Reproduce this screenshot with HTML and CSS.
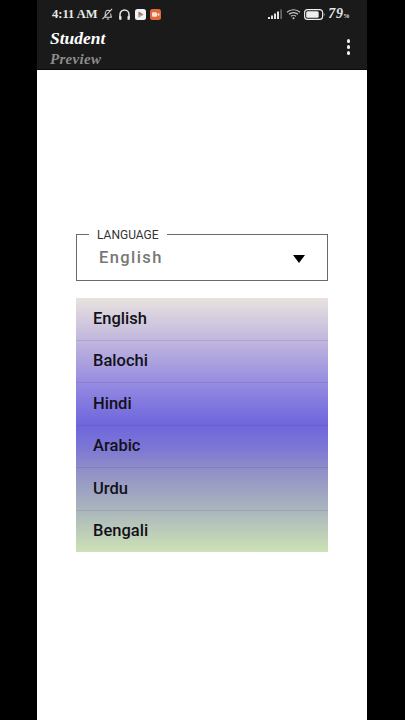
FILE: index.html
```html
<!DOCTYPE html>
<html lang="en">
<head>
<meta charset="utf-8">
<title>Student Preview</title>
<link rel="stylesheet" href="styles.css">
</head>
<body>
<div class="phone">
  <header class="appbar">
    <div class="status">
      <div class="status-left">
        <span class="time">4:11 AM</span>
        <svg class="ic" width="13" height="14" viewBox="0 0 14 14" fill="none" stroke="#d8d8d8" stroke-width="1.1"><path d="M3 10.5h8.5M3.6 10.5c1-1.2 1-2.4 1-4 0-2 1.2-3.5 3-3.5 1 0 1.8.4 2.3 1.2M10.4 6.500c0 1.500.2 2.800 1.100 4M6.300 12.300h2.400M1.500 12.500 12 1.500"/></svg>
        <svg class="ic" width="13" height="13" viewBox="0 0 13 13" fill="none" stroke="#e6e6e6" stroke-width="1.500"><path d="M2 10V6.500a4.500 4.500 0 0 1 9 0V10"/><path d="M1.500 8.500h1.700v3H1.500zM9.800 8.500h1.700v3H9.800z" fill="#e6e6e6" stroke-width=".6"/></svg>
        <svg class="ic" width="11" height="11" viewBox="0 0 11 11"><rect width="11" height="11" rx="2.500" fill="#f2f2f2"/><path d="M3.500 2.500 8.500 5.500 3.500 8.500Z" fill="#7a6bb0"/><path d="M3.500 5.500 8.500 5.500 3.500 8.500Z" fill="#d9a23c"/></svg>
        <svg class="ic" width="11" height="11" viewBox="0 0 11 11"><rect width="11" height="11" rx="2.500" fill="#e2673a"/><rect x="2" y="3.300" width="5" height="4.400" rx="1" fill="#fbe3d6"/><path d="M7.300 5.200 9.300 3.800V7.200L7.300 5.800Z" fill="#fbe3d6"/></svg>
      </div>
      <div class="status-right">
        <svg class="ic" width="15" height="10" viewBox="0 0 15 10" fill="#e2e2e2"><rect x="0" y="8" width="2" height="2"/><rect x="3" y="6.500" width="2" height="3.500"/><rect x="6" y="4.500" width="2" height="5.500"/><rect x="9" y="2.500" width="2" height="7.500"/><rect x="12.500" y="0.500" width="1.200" height="9.500" fill="#8a8a8a"/></svg>
        <svg class="ic wifi" width="15" height="12" viewBox="0 0 15 12" fill="none" stroke="#c8c8c8" stroke-width="1.200"><path d="M1 4.200C4.500.900 10.500.900 14 4.200M3 6.300c2.500-2.200 6.500-2.200 9 0M5 8.300c1.300-1.100 3.700-1.100 5 0"/><circle cx="7.500" cy="10.200" r="1" fill="#c8c8c8" stroke="none"/></svg>
        <svg class="ic" width="21" height="11" viewBox="0 0 21 11"><rect x=".6" y=".6" width="18" height="9.800" rx="3" fill="none" stroke="#eee" stroke-width="1.100"/><rect x="2.200" y="2.200" width="12.500" height="6.600" rx="1.500" fill="#eee"/><path d="M19.800 4v3c.8-.3 1-2.700 0-3Z" fill="#eee"/></svg>
        <span class="batt">79<small>%</small></span>
      </div>
    </div>
    <div class="bar">
      <div class="titles">
        <div class="title">Student</div>
        <div class="subtitle">Preview</div>
      </div>
      <button class="more" aria-label="More options"><i></i><i></i><i></i></button>
    </div>
  </header>
  <main class="content">
    <fieldset class="field">
      <legend>LANGUAGE</legend>
      <div class="select">
        <span class="value">English</span>
        <span class="caret"></span>
      </div>
    </fieldset>
    <ul class="menu">
      <li>English</li>
      <li>Balochi</li>
      <li>Hindi</li>
      <li>Arabic</li>
      <li>Urdu</li>
      <li>Bengali</li>
    </ul>
  </main>
</div>
</body>
</html>
```
FILE: styles.css
```css
* { box-sizing: border-box; }
html, body { margin: 0; height: 100%; }
body {
  background: #000;
  overflow: hidden;
  display: flex;
  justify-content: flex-start;
  padding-left: 37px;
}
.phone {
  width: 330px;
  height: 720px;
  background: #fff;
  display: flex;
  flex-direction: column;
}
.appbar {
  height: 70px;
  background: #1a1a1a;
  border-bottom: 1px solid #0c0c0c;
  color: #fff;
  padding: 0 13px;
}
.status {
  height: 28px;
  display: flex;
  justify-content: space-between;
  align-items: center;
  padding: 0 4px 0 2px;
}
.status-left, .status-right { display: flex; align-items: center; gap: 3px; }
.status-left { gap: 4px; }
.ic { display: block; }
.time, .batt {
  font-family: "Liberation Serif", serif;
  font-weight: 700;
  color: #e8e8e8;
}
.time { font-size: 12.500px; }
.batt { font-size: 14px; font-style: italic; letter-spacing: .6px; }
.batt small { font-size: 7px; }
.bar {
  display: flex;
  justify-content: space-between;
  align-items: flex-start;
}
.titles { font-family: "Liberation Serif", serif; font-style: italic; font-weight: 700; }
.title { font-size: 17.500px; line-height: 21px; margin-top: 0; color: #fff; }
.subtitle { font-size: 15px; line-height: 16px; margin-top: 2px; color: #8c8c8c; letter-spacing: .3px; }
.more {
  background: none;
  border: 0;
  padding: 0;
  margin: 11px 4px 0 0;
  display: flex;
  flex-direction: column;
  gap: 2.500px;
}
.more i { width: 3.500px; height: 3.500px; border-radius: 50%; background: #eee; display: block; }
.content {
  flex: 1;
  padding: 156px 39px 0;
  display: flex;
  flex-direction: column;
}
.field {
  margin: 0;
  height: 55px;
  padding: 0 22px;
  border: 1px solid #6a6a6a;
  border-radius: 0;
  min-width: 0;
}
.field legend {
  padding: 2px 8px 0;
  margin-left: -10px;
  font-family: Roboto, sans-serif;
  font-size: 12px;
  line-height: 14px;
  color: #333;
}
.select {
  display: flex;
  justify-content: space-between;
  align-items: center;
  height: 31px;
  margin-top: 0;
}
.value {
  font-family: Roboto, sans-serif;
  font-weight: 500;
  font-size: 16.500px;
  letter-spacing: 1.400px;
  color: #777;
}
.caret {
  width: 0;
  height: 0;
  margin-top: 3px;
  border-left: 6.500px solid transparent;
  border-right: 6.500px solid transparent;
  border-top: 8px solid #000;
}
.menu {
  list-style: none;
  margin: 17px 0 0;
  padding: 0;
  height: 254px;
  display: flex;
  flex-direction: column;
  background: linear-gradient(180deg, #e8e2de 0%, #c0b6de 17%, #8a80e0 38%, #6f66dc 50%, #7a74d6 58%, #8f8dc8 67%, #abb7bc 84%, #cde2b5 100%);
}
.menu li {
  flex: 1;
  display: flex;
  align-items: center;
  padding: 0 17px 1px;
  font-family: Roboto, sans-serif;
  font-weight: 500;
  font-size: 16.500px;
  color: #111118;
  border-bottom: 1px solid rgba(70, 60, 130, .14);
}
.menu li:last-child { border-bottom: 0; }
```
